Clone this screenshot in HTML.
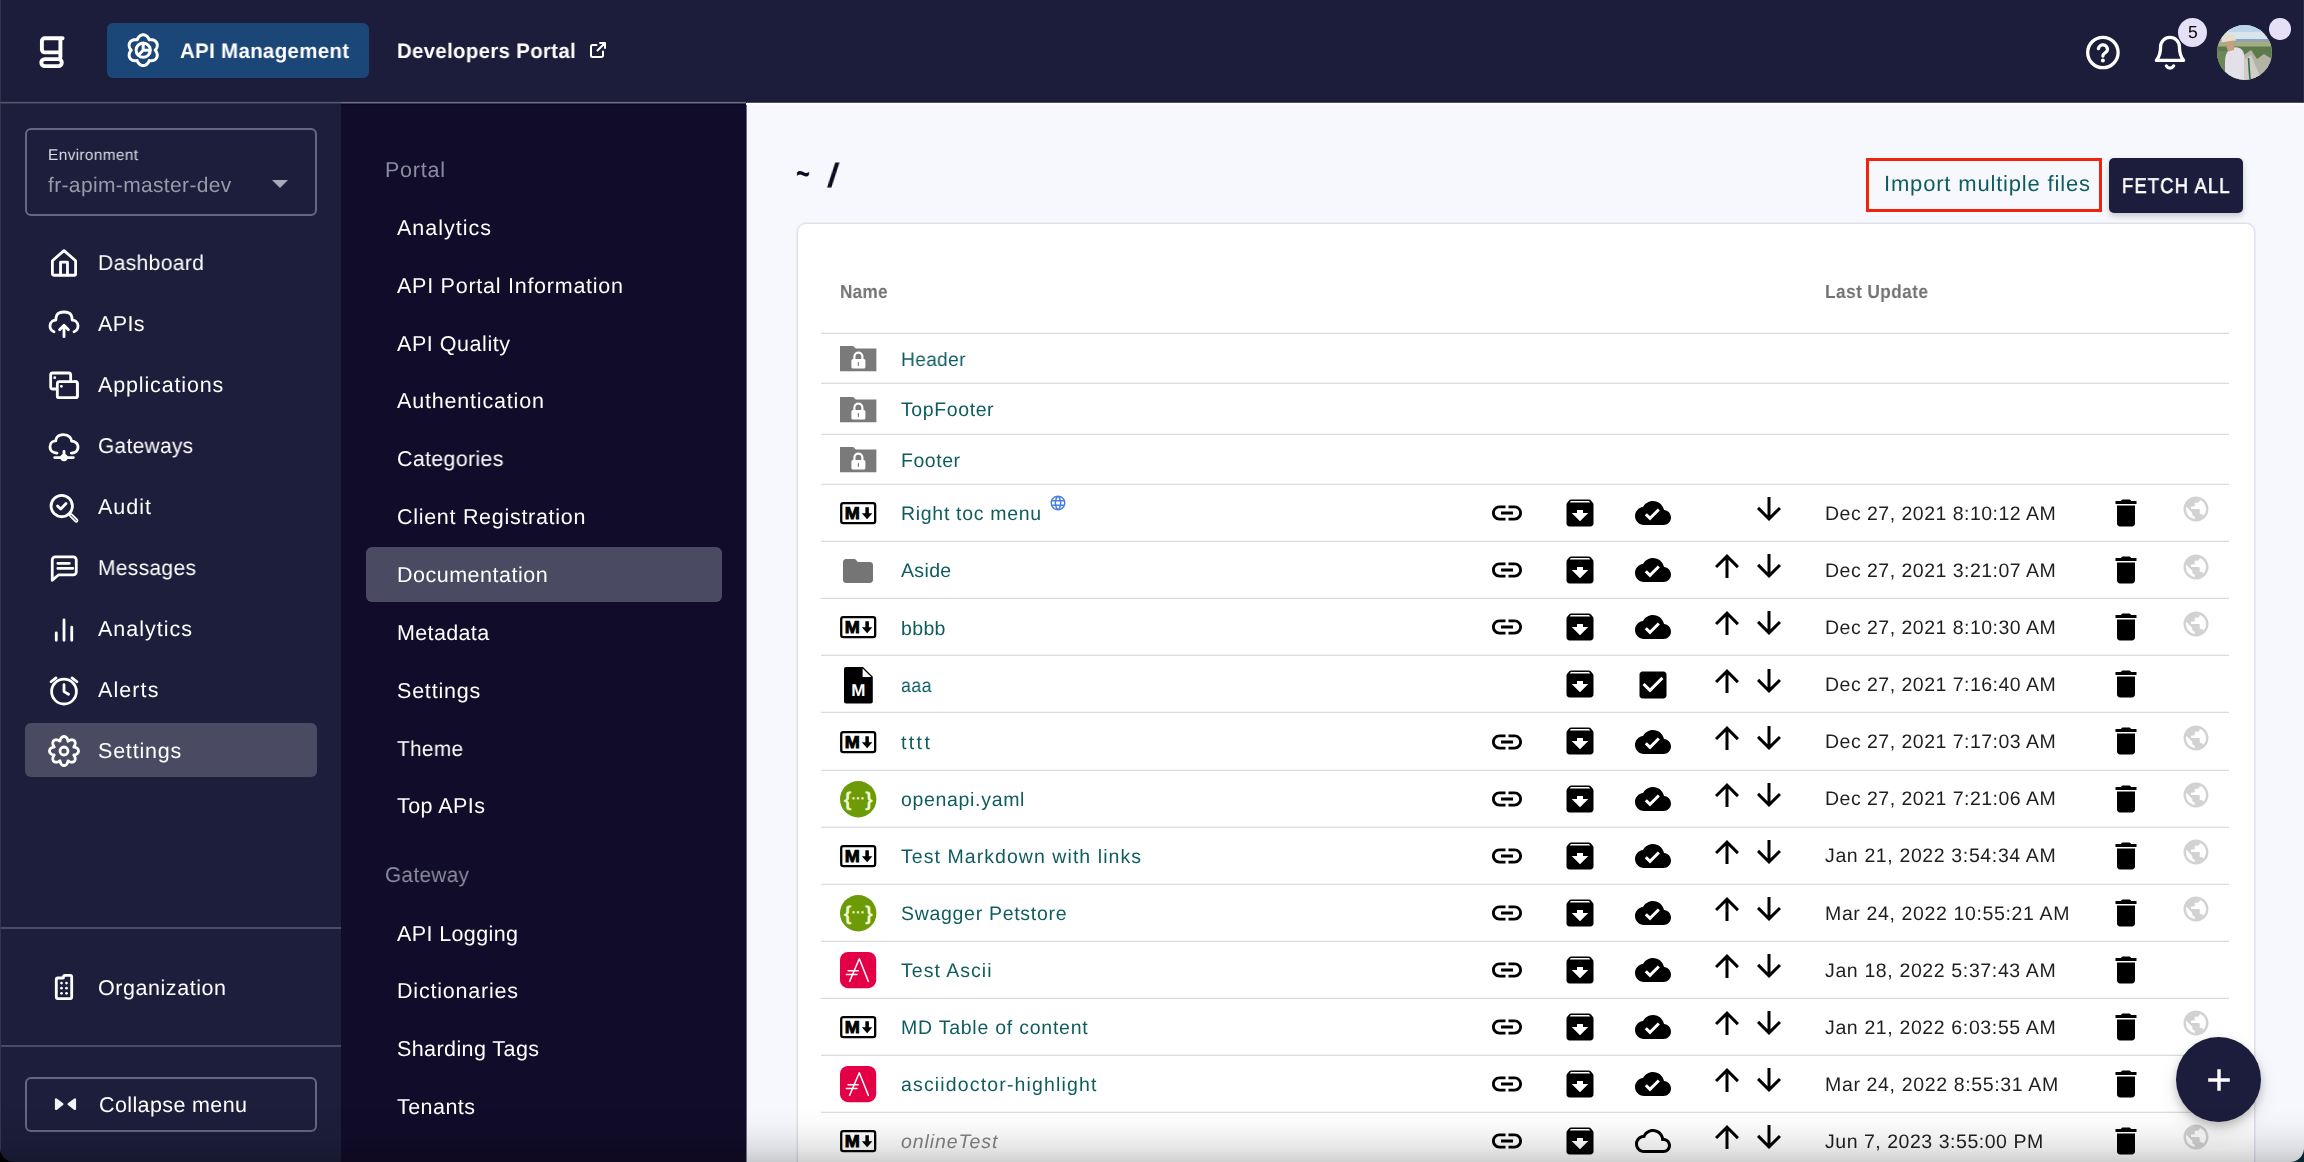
<!DOCTYPE html>
<html lang="en"><head><meta charset="utf-8"><title>Documentation</title>
<style>
*{box-sizing:border-box;margin:0;padding:0}
html,body{width:2304px;height:1162px;overflow:hidden;background:#f7f8fd}
body{font-family:"Liberation Sans",sans-serif;position:relative;color:#fff;text-rendering:geometricPrecision}
.abs{position:absolute}
.t{position:absolute;white-space:nowrap;line-height:1;will-change:transform}
#top{position:absolute;left:0;top:0;width:2304px;height:103px;background:#1c1d3a}
#side{position:absolute;left:0;top:103px;width:341px;height:1059px;background:#1d1e3b}
#nav2{position:absolute;left:341px;top:103px;width:405px;height:1059px;background:#110c29}
#main{position:absolute;left:746px;top:103px;width:1558px;height:1059px;background:#f7f8fd}
svg{position:absolute;overflow:visible}
.ic{fill:none;stroke:#fff;stroke-linecap:round;stroke-linejoin:round}
</style></head>
<body>
<header>
<div id="top"></div>
<svg style="left:30px;top:30px" width="44" height="44" viewBox="30 30 44 44"><g fill="none" stroke="#fff" stroke-width="3.900" stroke-linejoin="round" stroke-linecap="round">
<path d="M62.600 38.300H44.800a2.900 2.900 0 0 0-2.900 2.900v8.300a2.900 2.900 0 0 0 2.900 2.900h15.600V38.300v19"/>
<rect x="41.300" y="59.100" width="20.500" height="7" rx="3.500"/></g></svg>
<div class="abs" style="left:107px;top:23px;width:262px;height:55px;border-radius:6px;background:#1b4678"></div>
<svg style="left:120px;top:27px" width="46" height="46" viewBox="120 27 46 46"><g class="ic" stroke-width="3">
<path d="M155.20 50.20 L155.55 49.77 L155.88 49.31 L156.18 48.84 L156.45 48.34 L156.69 47.82 L156.89 47.29 L157.05 46.75 L157.16 46.20 L157.23 45.64 L157.24 45.09 L157.21 44.54 L157.12 44.00 L156.97 43.48 L156.78 42.98 L156.54 42.50 L156.24 42.05 L155.91 41.63 L155.52 41.25 L155.10 40.90 L154.65 40.59 L154.16 40.33 L153.65 40.11 L153.12 39.93 L152.57 39.80 L152.01 39.71 L151.44 39.65 L150.87 39.64 L150.31 39.67 L149.75 39.72 L149.20 39.81 L149.00 39.29 L148.77 38.78 L148.51 38.28 L148.21 37.79 L147.89 37.33 L147.53 36.89 L147.13 36.48 L146.71 36.10 L146.27 35.77 L145.80 35.48 L145.30 35.24 L144.79 35.05 L144.27 34.91 L143.74 34.83 L143.20 34.80 L142.66 34.83 L142.13 34.91 L141.61 35.05 L141.10 35.24 L140.60 35.48 L140.13 35.77 L139.69 36.10 L139.27 36.48 L138.87 36.89 L138.51 37.33 L138.19 37.79 L137.89 38.28 L137.63 38.78 L137.40 39.29 L137.20 39.81 L136.65 39.72 L136.09 39.67 L135.53 39.64 L134.96 39.65 L134.39 39.71 L133.83 39.80 L133.28 39.93 L132.75 40.11 L132.24 40.33 L131.75 40.59 L131.30 40.90 L130.88 41.25 L130.49 41.63 L130.16 42.05 L129.86 42.50 L129.62 42.98 L129.43 43.48 L129.28 44.00 L129.19 44.54 L129.16 45.09 L129.17 45.64 L129.24 46.20 L129.35 46.75 L129.51 47.29 L129.71 47.82 L129.95 48.34 L130.22 48.84 L130.52 49.31 L130.85 49.77 L131.20 50.20 L130.85 50.63 L130.52 51.09 L130.22 51.56 L129.95 52.06 L129.71 52.58 L129.51 53.11 L129.35 53.65 L129.24 54.20 L129.17 54.76 L129.16 55.31 L129.19 55.86 L129.28 56.40 L129.43 56.92 L129.62 57.42 L129.86 57.90 L130.16 58.35 L130.49 58.77 L130.88 59.15 L131.30 59.50 L131.75 59.81 L132.24 60.07 L132.75 60.29 L133.28 60.47 L133.83 60.60 L134.39 60.69 L134.96 60.75 L135.53 60.76 L136.09 60.73 L136.65 60.68 L137.20 60.59 L137.40 61.11 L137.63 61.62 L137.89 62.12 L138.19 62.61 L138.51 63.07 L138.87 63.51 L139.27 63.92 L139.69 64.30 L140.13 64.63 L140.60 64.92 L141.10 65.16 L141.61 65.35 L142.13 65.49 L142.66 65.57 L143.20 65.60 L143.74 65.57 L144.27 65.49 L144.79 65.35 L145.30 65.16 L145.80 64.92 L146.27 64.63 L146.71 64.30 L147.13 63.92 L147.53 63.51 L147.89 63.07 L148.21 62.61 L148.51 62.12 L148.77 61.62 L149.00 61.11 L149.20 60.59 L149.75 60.68 L150.31 60.73 L150.87 60.76 L151.44 60.75 L152.01 60.69 L152.57 60.60 L153.12 60.47 L153.65 60.29 L154.16 60.07 L154.65 59.81 L155.10 59.50 L155.52 59.15 L155.91 58.77 L156.24 58.35 L156.54 57.90 L156.78 57.42 L156.97 56.92 L157.12 56.40 L157.21 55.86 L157.24 55.31 L157.23 54.76 L157.16 54.20 L157.05 53.65 L156.89 53.11 L156.69 52.58 L156.45 52.06 L156.18 51.56 L155.88 51.09 L155.55 50.63Z"/>
<circle cx="143.200" cy="50.200" r="7.100"/><path d="M143.200 43.500v6.700h6.700M143.200 50.200l-4.600 4.800"/></g></svg>
<div class="t" style="left:180.2px;top:41px;font-size:21px;color:#fff;font-weight:bold;letter-spacing:0.36px;font-style:normal;transform:scaleX(0.9719);transform-origin:0 0;">API Management</div>
<div class="t" style="left:396.6px;top:41px;font-size:21px;color:#fff;font-weight:bold;letter-spacing:0.361px;font-style:normal;transform:scaleX(0.9693);transform-origin:0 0;">Developers Portal</div>
<svg style="left:589px;top:41px" width="18" height="18" viewBox="0 0 18 18"><g class="ic" stroke-width="2">
<path d="M14 10.5v4a1.5 1.5 0 0 1-1.5 1.5h-9A1.5 1.5 0 0 1 2 14.500v-9A1.5 1.500 0 0 1 3.500 4h4"/><path d="M11 2h5v5M16 2L8.500 9.500"/></g></svg>
<svg style="left:2080px;top:30px" width="46" height="46" viewBox="2080 30 46 46"><g class="ic" stroke-width="3.300">
<circle cx="2102.900" cy="52.500" r="15.200"/><path d="M2098.400 48.600a4.600 4.600 0 0 1 9.100.800c0 3.100-4.600 3.700-4.600 6.600"/></g><circle cx="2102.900" cy="60.400" r="2" fill="#fff"/></svg>
<svg style="left:2150px;top:30px" width="40" height="44" viewBox="2150 30 40 44"><g class="ic" stroke-width="3.300">
<path d="M2156.400 60.400c2.600-3.200 4.200-6.400 4.200-13.600a9.400 9.400 0 0 1 18.800 0c0 7.200 1.600 10.400 4.200 13.600z"/><path d="M2166.400 66a4.200 4.200 0 0 0 7.200 0"/></g></svg>
<div class="abs" style="left:2178px;top:17.500px;width:29px;height:29px;border-radius:50%;background:#e5dff8"></div>
<div class="t" style="left:2187.7px;top:24px;font-size:17.5px;color:#000;font-weight:normal;letter-spacing:0px;font-style:normal;">5</div>
<svg style="left:2217px;top:25px" width="55" height="55" viewBox="0 0 55 55"><defs><clipPath id="av"><circle cx="27.500" cy="27.500" r="27.400"/></clipPath></defs><g clip-path="url(#av)">
<rect width="55" height="55" fill="#d9e5ec"/><rect y="0" width="55" height="7" fill="#bcd6e8"/>
<rect y="14" width="55" height="3.500" fill="#8fa3b3"/><rect y="17" width="55" height="5" fill="#a4ad80"/>
<rect y="21.500" width="55" height="34" fill="#5d7a4c"/><path d="M0 26h12v29H0z" fill="#6c8759"/>
<path d="M27 30l7-5 6 9 7-5 8 5v21H27z" fill="#b5b2a6"/><path d="M28 34l6-4 5 12 6 13H28z" fill="#cfcdc4"/><path d="M31.500 33l1.500 22" stroke="#2e6b4f" stroke-width="1.600"/>
<path d="M8 55V37c0-8 3-13.500 9-14.500 6-1 10.500 3 10.500 10.500v22z" fill="#e3e0e9"/><path d="M7.500 15.500h9.500v9.500l-6 1.500z" fill="#c49f84"/><path d="M4.500 15c0-4 3-5.800 7.200-5.800s7.300 2.300 7.300 6.300l-6 .4-8.300 1.600z" fill="#e7ddc8"/>
</g></svg>
<div class="abs" style="left:2269px;top:18px;width:21.500px;height:21.500px;border-radius:50%;background:#e5dff8"></div>
</header>
<aside>
<div id="side"></div>
<div class="abs" style="left:0;top:101px;width:341px;height:3px;background:linear-gradient(#25263f 0,#25263f 1px,#55566e 1px,#55566e 2px,#36374f 2px,#36374f 3px);z-index:3"></div>
<div class="abs" style="left:341px;top:101px;width:405px;height:4px;background:linear-gradient(#27283f 0,#27283f 1px,#6c6d86 1px,#6c6d86 2px,#3a3a55 2px,#3a3a55 3px,#0b0720 3px,#0b0720 4px);z-index:3"></div>
<div class="abs" style="left:25px;top:128px;width:292px;height:88px;border:2px solid #676880;border-radius:6px"></div>
<div class="t" style="left:48.0px;top:148px;font-size:15.5px;color:#dcdce6;font-weight:normal;letter-spacing:0.352px;font-style:normal;transform:scaleX(0.9941);transform-origin:0 0;">Environment</div>
<div class="t" style="left:48.0px;top:175px;font-size:21px;color:#9899ab;font-weight:normal;letter-spacing:0.351px;font-style:normal;transform:scaleX(0.9982);transform-origin:0 0;">fr-apim-master-dev</div>
<svg style="left:272px;top:180px" width="16" height="8" viewBox="0 0 16 8"><path d="M0 0h16L8 8z" fill="#a9aab9"/></svg>
<div class="abs" style="left:25px;top:723px;width:292px;height:54px;border-radius:6px;background:#4a4b63"></div>
<svg style="left:48px;top:247.0px" width="32" height="32" viewBox="0 0 24 24"><g class="ic" stroke-width="2.1"><path d="M3.300 10.300L12 2.700l8.700 7.600V20.200a1 1 0 0 1-1 1h-15.400a1 1 0 0 1-1-1z"/><path d="M9.400 21v-9.600h5.200V21"/></g></svg>
<div class="t" style="left:98.2px;top:253px;font-size:21.5px;color:#fff;font-weight:normal;letter-spacing:0.357px;font-style:normal;transform:scaleX(0.9811);transform-origin:0 0;">Dashboard</div>
<svg style="left:48px;top:307.9px" width="32" height="32" viewBox="0 0 24 24"><g class="ic" stroke-width="2.1"><path d="M12 21.500V13m0 0l3.300 3.300M12 13l-3.300 3.300"/><path d="M19.500 17.800c1.500-.6 3-2 3-4.300 0-3.500-2.900-4.500-4.400-4.500 0-2 0-6-6.100-6s-6.100 4-6.100 6c-1.500 0-4.400 1-4.400 4.500 0 2.300 1.500 3.700 3 4.300"/></g></svg>
<div class="t" style="left:98.2px;top:314px;font-size:21.5px;color:#fff;font-weight:normal;letter-spacing:0.354px;font-style:normal;transform:scaleX(0.99);transform-origin:0 0;">APIs</div>
<svg style="left:48px;top:368.9px" width="32" height="32" viewBox="0 0 24 24"><g class="ic" stroke-width="2.1"><path d="M7 19.500v.5a1.500 1.500 0 0 0 1.500 1.500h12A1.500 1.500 0 0 0 22 20v-9a1.500 1.500 0 0 0-1.500-1.500H20"/><rect x="2" y="3" width="15" height="12" rx="1.500"/><rect x="7" y="9.500" width="15" height="12" rx="1.500" fill="#1d1e3b"/><path d="M5 6.500h.100M10 13h.100"/></g></svg>
<div class="t" style="left:98.2px;top:375px;font-size:21.5px;color:#fff;font-weight:normal;letter-spacing:0.851px;font-style:normal;">Applications</div>
<svg style="left:48px;top:429.9px" width="32" height="32" viewBox="0 0 24 24"><g class="ic" stroke-width="2.1"><path d="M6.800 17.300c-2.300 0-5.300-1.200-5.300-4.700 0-3.300 2.700-4.400 4.300-4.400 0-1.900 1.100-4.700 5.700-4.700s6.200 2.900 6.200 4.900c1.500 0 4.800.9 4.800 4.400 0 3.400-2.900 4.500-5 4.500"/><path d="M12 16v4M5 20.700h14"/><circle cx="12" cy="20.700" r="1.700" fill="#fff"/></g></svg>
<div class="t" style="left:98.2px;top:436px;font-size:21.5px;color:#fff;font-weight:normal;letter-spacing:0.361px;font-style:normal;transform:scaleX(0.9701);transform-origin:0 0;">Gateways</div>
<svg style="left:48px;top:490.8px" width="32" height="32" viewBox="0 0 24 24"><g class="ic" stroke-width="2.1"><circle cx="10.300" cy="11.300" r="8"/><path d="M7.200 11.300l2.300 2.300 4-4.200"/><path d="M17.200 18.200l4 4" stroke-width="3.200"/><path d="M17.200 18.200l4 4" stroke="#1d1e3b" stroke-width="0.700"/></g></svg>
<div class="t" style="left:98.2px;top:497px;font-size:21.5px;color:#fff;font-weight:normal;letter-spacing:0.996px;font-style:normal;">Audit</div>
<svg style="left:48px;top:551.8px" width="32" height="32" viewBox="0 0 24 24"><g class="ic" stroke-width="2.1"><path d="M3.200 21.200V5.800a2.200 2.200 0 0 1 2.200-2.200h13.600a2.200 2.200 0 0 1 2.200 2.200v9.200a2.200 2.200 0 0 1-2.200 2.200H7.800z"/><path d="M7.400 8.600h8.600M7.400 12.300h11.200"/></g></svg>
<div class="t" style="left:98.2px;top:558px;font-size:21.5px;color:#fff;font-weight:normal;letter-spacing:0.359px;font-style:normal;transform:scaleX(0.975);transform-origin:0 0;">Messages</div>
<svg style="left:48px;top:612.7px" width="32" height="32" viewBox="0 0 24 24"><g class="ic" stroke-width="2.1"><path d="M6.200 20.500v-5.600M12 20.500V5.200M17.800 20.500v-9.800"/></g></svg>
<div class="t" style="left:98.2px;top:619px;font-size:21.5px;color:#fff;font-weight:normal;letter-spacing:0.994px;font-style:normal;">Analytics</div>
<svg style="left:48px;top:673.7px" width="32" height="32" viewBox="0 0 24 24"><g class="ic" stroke-width="2.1"><circle cx="12" cy="13.200" r="9.300"/><path d="M12 8V13.200l3.400 2M2.300 5.800L6 2.900M21.700 5.800L18 2.900"/></g></svg>
<div class="t" style="left:98.2px;top:680px;font-size:21.5px;color:#fff;font-weight:normal;letter-spacing:1.086px;font-style:normal;">Alerts</div>
<svg style="left:48px;top:734.6px" width="32" height="32" viewBox="0 0 24 24"><g class="ic" stroke-width="2.1"><circle cx="12" cy="12" r="3"/><path d="M22.90 12.00 L22.87 11.62 L22.77 11.25 L22.62 10.88 L22.40 10.54 L22.13 10.21 L21.80 9.92 L21.42 9.65 L20.99 9.42 L20.51 9.23 L19.98 9.10 L19.34 9.03 L19.51 8.65 L19.84 8.17 L20.09 7.70 L20.26 7.23 L20.37 6.77 L20.42 6.32 L20.41 5.89 L20.35 5.48 L20.23 5.09 L20.06 4.74 L19.84 4.43 L19.57 4.16 L19.26 3.94 L18.91 3.77 L18.52 3.65 L18.11 3.59 L17.68 3.58 L17.23 3.63 L16.77 3.74 L16.30 3.91 L15.83 4.16 L15.35 4.49 L14.97 4.66 L14.90 4.02 L14.77 3.49 L14.58 3.01 L14.35 2.58 L14.08 2.20 L13.79 1.87 L13.46 1.60 L13.12 1.38 L12.75 1.23 L12.38 1.13 L12.00 1.10 L11.62 1.13 L11.25 1.23 L10.88 1.38 L10.54 1.60 L10.21 1.87 L9.92 2.20 L9.65 2.58 L9.42 3.01 L9.23 3.49 L9.10 4.02 L9.03 4.66 L8.65 4.49 L8.17 4.16 L7.70 3.91 L7.23 3.74 L6.77 3.63 L6.32 3.58 L5.89 3.59 L5.48 3.65 L5.09 3.77 L4.74 3.94 L4.43 4.16 L4.16 4.43 L3.94 4.74 L3.77 5.09 L3.65 5.48 L3.59 5.89 L3.58 6.32 L3.63 6.77 L3.74 7.23 L3.91 7.70 L4.16 8.17 L4.49 8.65 L4.66 9.03 L4.02 9.10 L3.49 9.23 L3.01 9.42 L2.58 9.65 L2.20 9.92 L1.87 10.21 L1.60 10.54 L1.38 10.88 L1.23 11.25 L1.13 11.62 L1.10 12.00 L1.13 12.38 L1.23 12.75 L1.38 13.12 L1.60 13.46 L1.87 13.79 L2.20 14.08 L2.58 14.35 L3.01 14.58 L3.49 14.77 L4.02 14.90 L4.66 14.97 L4.49 15.35 L4.16 15.83 L3.91 16.30 L3.74 16.77 L3.63 17.23 L3.58 17.68 L3.59 18.11 L3.65 18.52 L3.77 18.91 L3.94 19.26 L4.16 19.57 L4.43 19.84 L4.74 20.06 L5.09 20.23 L5.48 20.35 L5.89 20.41 L6.32 20.42 L6.77 20.37 L7.23 20.26 L7.70 20.09 L8.17 19.84 L8.65 19.51 L9.03 19.34 L9.10 19.98 L9.23 20.51 L9.42 20.99 L9.65 21.42 L9.92 21.80 L10.21 22.13 L10.54 22.40 L10.88 22.62 L11.25 22.77 L11.62 22.87 L12.00 22.90 L12.38 22.87 L12.75 22.77 L13.12 22.62 L13.46 22.40 L13.79 22.13 L14.08 21.80 L14.35 21.42 L14.58 20.99 L14.77 20.51 L14.90 19.98 L14.97 19.34 L15.35 19.51 L15.83 19.84 L16.30 20.09 L16.77 20.26 L17.23 20.37 L17.68 20.42 L18.11 20.41 L18.52 20.35 L18.91 20.23 L19.26 20.06 L19.57 19.84 L19.84 19.57 L20.06 19.26 L20.23 18.91 L20.35 18.52 L20.41 18.11 L20.42 17.68 L20.37 17.23 L20.26 16.77 L20.09 16.30 L19.84 15.83 L19.51 15.35 L19.34 14.97 L19.98 14.90 L20.51 14.77 L20.99 14.58 L21.42 14.35 L21.80 14.08 L22.13 13.79 L22.40 13.46 L22.62 13.12 L22.77 12.75 L22.87 12.38Z"/></g></svg>
<div class="t" style="left:98.2px;top:741px;font-size:21.5px;color:#fff;font-weight:normal;letter-spacing:0.788px;font-style:normal;">Settings</div>
<div class="abs" style="left:0;top:927px;width:341px;height:2px;background:#4b4c64"></div>
<svg style="left:48px;top:968px" width="32" height="38" viewBox="48 968 32 38"><g class="ic" stroke-width="2.800"><path d="M56.300 980v17.100a1.500 1.500 0 0 0 1.500 1.500h12.400a1.500 1.500 0 0 0 1.500-1.500V976.900a1.500 1.500 0 0 0-1.500-1.500h-5.200a1.500 1.500 0 0 0-1.500 1.500v.6a.5.500 0 0 1-.5.500h-5.200a1.500 1.500 0 0 0-1.500 1.500z"/></g><g fill="#fff"><circle cx="61.500" cy="983.100" r="1.350"/><circle cx="66.500" cy="983.100" r="1.350"/><circle cx="61.500" cy="988.200" r="1.350"/><circle cx="66.500" cy="988.200" r="1.350"/><circle cx="61.500" cy="993.300" r="1.350"/><circle cx="66.500" cy="993.300" r="1.350"/></g></svg>
<div class="t" style="left:98.2px;top:978px;font-size:21.5px;color:#fff;font-weight:normal;letter-spacing:0.554px;font-style:normal;">Organization</div>
<div class="abs" style="left:0;top:1045px;width:341px;height:2px;background:#4b4c64"></div>
<div class="abs" style="left:25px;top:1077px;width:292px;height:55px;border:2px solid #676880;border-radius:6px"></div>
<svg style="left:50px;top:1094px" width="32" height="20" viewBox="50 1094 32 20"><path d="M56 1099.400v9.600l6.400-4.800zM75 1099.400v9.600l-6.400-4.800z" fill="#f4f4fb" stroke="#f4f4fb" stroke-width="2.200" stroke-linejoin="round"/></svg>
<div class="t" style="left:99.0px;top:1095px;font-size:21.5px;color:#fff;font-weight:normal;letter-spacing:0.382px;font-style:normal;">Collapse menu</div>
</aside>
<nav>
<div id="nav2"></div>
<div class="t" style="left:384.8px;top:160px;font-size:21.5px;color:#8b8c9f;font-weight:normal;letter-spacing:0.766px;font-style:normal;">Portal</div>
<div class="abs" style="left:366px;top:547px;width:356px;height:54.500px;border-radius:6px;background:#4a4b63"></div>
<div class="t" style="left:396.8px;top:218px;font-size:21.5px;color:#fff;font-weight:normal;letter-spacing:0.994px;font-style:normal;">Analytics</div>
<div class="t" style="left:396.8px;top:276px;font-size:21.5px;color:#fff;font-weight:normal;letter-spacing:0.746px;font-style:normal;">API Portal Information</div>
<div class="t" style="left:396.8px;top:334px;font-size:21.5px;color:#fff;font-weight:normal;letter-spacing:0.545px;font-style:normal;">API Quality</div>
<div class="t" style="left:396.8px;top:391px;font-size:21.5px;color:#fff;font-weight:normal;letter-spacing:0.818px;font-style:normal;">Authentication</div>
<div class="t" style="left:396.8px;top:449px;font-size:21.5px;color:#fff;font-weight:normal;letter-spacing:0.352px;font-style:normal;transform:scaleX(0.9929);transform-origin:0 0;">Categories</div>
<div class="t" style="left:396.8px;top:507px;font-size:21.5px;color:#fff;font-weight:normal;letter-spacing:0.707px;font-style:normal;">Client Registration</div>
<div class="t" style="left:396.8px;top:565px;font-size:21.5px;color:#fff;font-weight:normal;letter-spacing:0.498px;font-style:normal;">Documentation</div>
<div class="t" style="left:396.8px;top:623px;font-size:21.5px;color:#fff;font-weight:normal;letter-spacing:0.35px;font-style:normal;transform:scaleX(0.9988);transform-origin:0 0;">Metadata</div>
<div class="t" style="left:396.8px;top:681px;font-size:21.5px;color:#fff;font-weight:normal;letter-spacing:0.788px;font-style:normal;">Settings</div>
<div class="t" style="left:396.8px;top:739px;font-size:21.5px;color:#fff;font-weight:normal;letter-spacing:0.363px;font-style:normal;transform:scaleX(0.9653);transform-origin:0 0;">Theme</div>
<div class="t" style="left:396.8px;top:796px;font-size:21.5px;color:#fff;font-weight:normal;letter-spacing:0.449px;font-style:normal;">Top APIs</div>
<div class="t" style="left:384.8px;top:865px;font-size:21.5px;color:#8b8c9f;font-weight:normal;letter-spacing:0.363px;font-style:normal;transform:scaleX(0.9651);transform-origin:0 0;">Gateway</div>
<div class="t" style="left:396.8px;top:924px;font-size:21.5px;color:#fff;font-weight:normal;letter-spacing:0.384px;font-style:normal;">API Logging</div>
<div class="t" style="left:396.8px;top:981px;font-size:21.5px;color:#fff;font-weight:normal;letter-spacing:0.788px;font-style:normal;">Dictionaries</div>
<div class="t" style="left:396.8px;top:1039px;font-size:21.5px;color:#fff;font-weight:normal;letter-spacing:0.411px;font-style:normal;">Sharding Tags</div>
<div class="t" style="left:396.8px;top:1097px;font-size:21.5px;color:#fff;font-weight:normal;letter-spacing:0.448px;font-style:normal;">Tenants</div>
</nav>
<main>
<div id="main"></div>
<div class="abs" style="left:747px;top:102px;width:1557px;height:3px;background:linear-gradient(#505169 0,#505169 1px,#fff 1px,#fff 2px,#fbfbfe 2px,#fbfbfe 3px)"></div>
<div class="abs" style="left:2303px;top:0;width:1px;height:102px;background:#2c2d49"></div>
<div class="t" style="left:795.6px;top:157px;font-size:34px;color:#0b0a1f;font-weight:bold;letter-spacing:0px;font-style:normal;transform:scaleX(0.7);transform-origin:0 0;">~</div>
<div class="t" style="left:825.7px;top:160px;font-size:33.5px;color:#0b0a1f;font-weight:bold;letter-spacing:0px;font-style:normal;transform:skewX(-7deg) scaleX(1.08);transform-origin:0 100%;">/</div>
<div class="abs" style="left:1866px;top:158px;width:236px;height:54px;border:3px solid #f0240c"></div>
<div class="t" style="left:1884.0px;top:173px;font-size:22px;color:#0f5c5f;font-weight:normal;letter-spacing:0.824px;font-style:normal;">Import multiple files</div>
<div class="abs" style="left:2109px;top:158px;width:134px;height:55px;border-radius:5px;background:#1c1d3c;box-shadow:0 3px 6px rgba(0,0,0,.2)"></div>
<div class="t" style="left:2122.0px;top:176px;font-size:21.5px;color:#fff;font-weight:normal;letter-spacing:1.406px;font-style:normal;transform:scaleX(0.8535);transform-origin:0 0;-webkit-text-stroke:0.6px #fff;">FETCH ALL</div>
<div class="abs" style="left:796.500px;top:222.500px;width:1458px;height:960px;border:1px solid #dedfe7;box-shadow:0 0 0 1px rgba(222,223,231,.45);border-radius:9px;background:#fff"></div>
<div class="t" style="left:840.4px;top:283px;font-size:19px;color:#727272;font-weight:bold;letter-spacing:0.389px;font-style:normal;transform:scaleX(0.8995);transform-origin:0 0;">Name</div>
<div class="t" style="left:1825.0px;top:283px;font-size:19px;color:#727272;font-weight:bold;letter-spacing:0.383px;font-style:normal;transform:scaleX(0.9149);transform-origin:0 0;">Last Update</div>
<div class="row">
<div class="abs" style="left:821px;top:332px;width:1408px;height:2px;background:linear-gradient(#f5f5f5 50%,#dcdcdc 50%)"></div>
<svg style="left:839.700px;top:346.4px" width="36.400" height="25.200" viewBox="0 0 36.400 25.200"><path d="M0 0h13.200l2.600 2.400h20.600v22.800H0z" fill="#7a7a7a"/>
<rect x="11.400" y="13" width="14" height="9.600" rx="1.600" fill="#fff"/><path d="M14.400 13.500v-2.900a4 4 0 0 1 8 0v2.900" fill="none" stroke="#fff" stroke-width="2.200"/><rect x="17.800" y="16.200" width="1.200" height="3.600" fill="#7a7a7a"/></svg>
<div class="t" style="left:901.2px;top:351px;font-size:19.5px;color:#0f5c5f;font-weight:normal;letter-spacing:0.357px;font-style:normal;transform:scaleX(0.9809);transform-origin:0 0;">Header</div>
</div>
<div class="row">
<div class="abs" style="left:821px;top:382px;width:1408px;height:2px;background:linear-gradient(#f5f5f5 50%,#dcdcdc 50%)"></div>
<svg style="left:839.700px;top:396.7px" width="36.400" height="25.200" viewBox="0 0 36.400 25.200"><path d="M0 0h13.200l2.600 2.400h20.600v22.800H0z" fill="#7a7a7a"/>
<rect x="11.400" y="13" width="14" height="9.600" rx="1.600" fill="#fff"/><path d="M14.400 13.500v-2.900a4 4 0 0 1 8 0v2.900" fill="none" stroke="#fff" stroke-width="2.200"/><rect x="17.800" y="16.200" width="1.200" height="3.600" fill="#7a7a7a"/></svg>
<div class="t" style="left:901.2px;top:401px;font-size:19.5px;color:#0f5c5f;font-weight:normal;letter-spacing:0.598px;font-style:normal;">TopFooter</div>
</div>
<div class="row">
<div class="abs" style="left:821px;top:433px;width:1408px;height:2px;background:linear-gradient(#f5f5f5 50%,#dcdcdc 50%)"></div>
<svg style="left:839.700px;top:447.0px" width="36.400" height="25.200" viewBox="0 0 36.400 25.200"><path d="M0 0h13.200l2.600 2.400h20.600v22.800H0z" fill="#7a7a7a"/>
<rect x="11.400" y="13" width="14" height="9.600" rx="1.600" fill="#fff"/><path d="M14.400 13.500v-2.900a4 4 0 0 1 8 0v2.900" fill="none" stroke="#fff" stroke-width="2.200"/><rect x="17.800" y="16.200" width="1.200" height="3.600" fill="#7a7a7a"/></svg>
<div class="t" style="left:901.2px;top:452px;font-size:19.5px;color:#0f5c5f;font-weight:normal;letter-spacing:0.528px;font-style:normal;">Footer</div>
</div>
<div class="row">
<div class="abs" style="left:821px;top:483px;width:1408px;height:2px;background:linear-gradient(#f5f5f5 50%,#dcdcdc 50%)"></div>
<svg style="left:839.700px;top:502.2px" width="36.400" height="22.400" viewBox="0 0 208 128"><rect x="7" y="7" width="194" height="114" rx="12" fill="#fff" stroke="#000" stroke-width="13"/><text x="27" y="98" font-family="Liberation Sans, sans-serif" font-weight="bold" font-size="99" textLength="86" lengthAdjust="spacingAndGlyphs" stroke="#000" stroke-width="5">M</text><path d="M155 98l-30-33h20V30h20v35h20z"/></svg>
<div class="t" style="left:901.2px;top:505px;font-size:19.5px;color:#0f5c5f;font-weight:normal;letter-spacing:0.696px;font-style:normal;">Right toc menu</div>
<svg style="left:1048.5px;top:494.2px" width="18" height="18" viewBox="0 0 24 24"><path d="M11.990 2C6.470 2 2 6.480 2 12s4.470 10 9.990 10C17.520 22 22 17.520 22 12S17.520 2 11.990 2zm6.930 6h-2.950c-.320-1.250-.780-2.450-1.380-3.560 1.840.630 3.370 1.910 4.330 3.560zM12 4.040c.830 1.200 1.480 2.530 1.910 3.960h-3.820c.430-1.430 1.080-2.760 1.910-3.960zM4.260 14C4.100 13.360 4 12.690 4 12s.100-1.360.260-2h3.380c-.080.660-.140 1.320-.140 2 0 .680.060 1.340.140 2H4.260zm.820 2h2.950c.320 1.250.780 2.450 1.380 3.560-1.840-.630-3.370-1.900-4.330-3.560zm2.950-8H5.080c.960-1.660 2.490-2.930 4.330-3.560C8.810 5.550 8.350 6.750 8.030 8zM12 19.960c-.830-1.200-1.480-2.530-1.910-3.960h3.820c-.430 1.430-1.080 2.760-1.910 3.960zM14.340 14H9.660c-.090-.660-.160-1.320-.160-2 0-.680.070-1.350.160-2h4.680c.090.650.160 1.320.160 2 0 .680-.070 1.340-.160 2zm.250 5.560c.600-1.110 1.060-2.310 1.380-3.560h2.950c-.960 1.650-2.490 2.930-4.330 3.560zM16.360 14c.080-.660.140-1.320.140-2 0-.680-.060-1.340-.140-2h3.380c.160.640.260 1.310.260 2s-.100 1.360-.260 2h-3.380z" fill="#4a80e4"/></svg>
<svg style="left:1488.7px;top:495.2px" width="36" height="36" viewBox="0 0 24 24"><path d="M3.9 12c0-1.71 1.39-3.1 3.1-3.1h4V7H7c-2.76 0-5 2.24-5 5s2.24 5 5 5h4v-1.9H7c-1.71 0-3.1-1.39-3.1-3.1zM8 13h8v-2H8v2zm9-6h-4v1.9h4c1.71 0 3.1 1.39 3.1 3.1s-1.39 3.1-3.1 3.1h-4V17h4c2.76 0 5-2.24 5-5s-2.24-5-5-5z" fill="#000"/></svg>
<svg style="left:1562.2px;top:495.0px" width="36" height="36" viewBox="0 0 24 24"><path d="M20.54 5.23l-1.39-1.68C18.88 3.21 18.47 3 18 3H6c-.47 0-.88.21-1.16.55L3.46 5.23C3.17 5.57 3 6.02 3 6.5V19c0 1.1.9 2 2 2h14c1.1 0 2-.9 2-2V6.5c0-.48-.17-.93-.46-1.27zM12 17.5L6.5 12H10v-2h4v2h3.5L12 17.5zM5.12 5l.81-1h12l.94 1H5.12z" fill="#000"/></svg>
<svg style="left:1635.4px;top:495.2px" width="36" height="36" viewBox="0 0 24 24"><path d="M19.35 10.04C18.67 6.59 15.64 4 12 4 9.11 4 6.6 5.64 5.35 8.04 2.34 8.36 0 10.91 0 14c0 3.31 2.69 6 6 6h13c2.76 0 5-2.24 5-5 0-2.64-2.05-4.78-4.65-4.96zM10 17l-3.5-3.5 1.41-1.41L10 14.17 15.18 9l1.41 1.41L10 17z" fill="#000"/></svg>
<svg style="left:1751.0px;top:491.2px" width="36" height="36" viewBox="0 0 24 24"><path d="M20 12l-1.41-1.41L13 16.17V4h-2v12.17l-5.58-5.59L4 12l8 8 8-8z" fill="#000"/></svg>
<div class="t" style="left:1824.8px;top:505px;font-size:19.5px;color:#1f1f1f;font-weight:normal;letter-spacing:0.483px;font-style:normal;">Dec 27, 2021 8:10:12 AM</div>
<svg style="left:2107.5px;top:495.0px" width="36" height="36" viewBox="0 0 24 24"><path d="M6 19c0 1.1.9 2 2 2h8c1.1 0 2-.9 2-2V7H6v12zM19 4h-3.5l-1-1h-5l-1 1H5v2h14V4z" fill="#000"/></svg>
<svg style="left:2181.0px;top:494.4px" width="30" height="30" viewBox="0 0 24 24"><path d="M12 2C6.48 2 2 6.48 2 12s4.48 10 10 10 10-4.480 10-10S17.52 2 12 2zm-1 17.930c-3.950-.490-7-3.850-7-7.930 0-.620.080-1.210.210-1.790L9 15v1c0 1.100.900 2 2 2v1.930zm6.900-2.540c-.260-.810-1-1.390-1.900-1.390h-1v-3c0-.550-.450-1-1-1H8v-2h2c.550 0 1-.450 1-1V7h2c1.100 0 2-.900 2-2v-.410c2.930 1.190 5 4.060 5 7.410 0 2.080-.800 3.970-2.100 5.390z" fill="#d2d2d2"/></svg>
</div>
<div class="row">
<div class="abs" style="left:821px;top:540px;width:1408px;height:2px;background:linear-gradient(#f5f5f5 50%,#dcdcdc 50%)"></div>
<svg style="left:840.0px;top:552.5px" width="36" height="36" viewBox="0 0 24 24"><path d="M10 4H4c-1.100 0-1.990.900-1.990 2L2 18c0 1.100.900 2 2 2h16c1.100 0 2-.900 2-2V8c0-1.100-.900-2-2-2h-8l-2-2z" fill="#757575"/></svg>
<div class="t" style="left:901.2px;top:562px;font-size:19.5px;color:#0f5c5f;font-weight:normal;letter-spacing:0.351px;font-style:normal;transform:scaleX(0.9963);transform-origin:0 0;">Aside</div>
<svg style="left:1488.7px;top:552.3px" width="36" height="36" viewBox="0 0 24 24"><path d="M3.9 12c0-1.71 1.39-3.1 3.1-3.1h4V7H7c-2.76 0-5 2.24-5 5s2.24 5 5 5h4v-1.9H7c-1.71 0-3.1-1.39-3.1-3.1zM8 13h8v-2H8v2zm9-6h-4v1.9h4c1.71 0 3.1 1.39 3.1 3.1s-1.39 3.1-3.1 3.1h-4V17h4c2.76 0 5-2.24 5-5s-2.24-5-5-5z" fill="#000"/></svg>
<svg style="left:1562.2px;top:552.1px" width="36" height="36" viewBox="0 0 24 24"><path d="M20.54 5.23l-1.39-1.68C18.88 3.21 18.47 3 18 3H6c-.47 0-.88.21-1.16.55L3.46 5.23C3.17 5.57 3 6.02 3 6.5V19c0 1.1.9 2 2 2h14c1.1 0 2-.9 2-2V6.5c0-.48-.17-.93-.46-1.27zM12 17.5L6.5 12H10v-2h4v2h3.5L12 17.5zM5.12 5l.81-1h12l.94 1H5.12z" fill="#000"/></svg>
<svg style="left:1635.4px;top:552.3px" width="36" height="36" viewBox="0 0 24 24"><path d="M19.35 10.04C18.67 6.59 15.64 4 12 4 9.11 4 6.6 5.64 5.35 8.04 2.34 8.36 0 10.91 0 14c0 3.31 2.69 6 6 6h13c2.76 0 5-2.24 5-5 0-2.64-2.05-4.78-4.65-4.96zM10 17l-3.5-3.5 1.41-1.41L10 14.17 15.18 9l1.41 1.41L10 17z" fill="#000"/></svg>
<svg style="left:1708.6px;top:548.3px" width="36" height="36" viewBox="0 0 24 24"><path d="M4 12l1.41 1.41L11 7.83V20h2V7.83l5.58 5.59L20 12l-8-8-8 8z" fill="#000"/></svg>
<svg style="left:1751.0px;top:548.3px" width="36" height="36" viewBox="0 0 24 24"><path d="M20 12l-1.41-1.41L13 16.17V4h-2v12.17l-5.58-5.59L4 12l8 8 8-8z" fill="#000"/></svg>
<div class="t" style="left:1824.8px;top:562px;font-size:19.5px;color:#1f1f1f;font-weight:normal;letter-spacing:0.483px;font-style:normal;">Dec 27, 2021 3:21:07 AM</div>
<svg style="left:2107.5px;top:552.1px" width="36" height="36" viewBox="0 0 24 24"><path d="M6 19c0 1.1.9 2 2 2h8c1.1 0 2-.9 2-2V7H6v12zM19 4h-3.5l-1-1h-5l-1 1H5v2h14V4z" fill="#000"/></svg>
<svg style="left:2181.0px;top:551.5px" width="30" height="30" viewBox="0 0 24 24"><path d="M12 2C6.48 2 2 6.48 2 12s4.48 10 10 10 10-4.480 10-10S17.52 2 12 2zm-1 17.930c-3.950-.490-7-3.850-7-7.930 0-.620.080-1.210.210-1.790L9 15v1c0 1.100.900 2 2 2v1.930zm6.900-2.540c-.260-.810-1-1.390-1.900-1.390h-1v-3c0-.550-.450-1-1-1H8v-2h2c.550 0 1-.450 1-1V7h2c1.100 0 2-.900 2-2v-.410c2.930 1.190 5 4.060 5 7.410 0 2.080-.800 3.970-2.100 5.390z" fill="#d2d2d2"/></svg>
</div>
<div class="row">
<div class="abs" style="left:821px;top:597px;width:1408px;height:2px;background:linear-gradient(#f5f5f5 50%,#dcdcdc 50%)"></div>
<svg style="left:839.700px;top:616.4px" width="36.400" height="22.400" viewBox="0 0 208 128"><rect x="7" y="7" width="194" height="114" rx="12" fill="#fff" stroke="#000" stroke-width="13"/><text x="27" y="98" font-family="Liberation Sans, sans-serif" font-weight="bold" font-size="99" textLength="86" lengthAdjust="spacingAndGlyphs" stroke="#000" stroke-width="5">M</text><path d="M155 98l-30-33h20V30h20v35h20z"/></svg>
<div class="t" style="left:901.2px;top:620px;font-size:19.5px;color:#0f5c5f;font-weight:normal;letter-spacing:0.352px;font-style:normal;transform:scaleX(0.9945);transform-origin:0 0;">bbbb</div>
<svg style="left:1488.7px;top:609.4px" width="36" height="36" viewBox="0 0 24 24"><path d="M3.9 12c0-1.71 1.39-3.1 3.1-3.1h4V7H7c-2.76 0-5 2.24-5 5s2.24 5 5 5h4v-1.9H7c-1.71 0-3.1-1.39-3.1-3.1zM8 13h8v-2H8v2zm9-6h-4v1.9h4c1.71 0 3.1 1.39 3.1 3.1s-1.39 3.1-3.1 3.1h-4V17h4c2.76 0 5-2.24 5-5s-2.24-5-5-5z" fill="#000"/></svg>
<svg style="left:1562.2px;top:609.2px" width="36" height="36" viewBox="0 0 24 24"><path d="M20.54 5.23l-1.39-1.68C18.88 3.21 18.47 3 18 3H6c-.47 0-.88.21-1.16.55L3.46 5.23C3.17 5.57 3 6.02 3 6.5V19c0 1.1.9 2 2 2h14c1.1 0 2-.9 2-2V6.5c0-.48-.17-.93-.46-1.27zM12 17.5L6.5 12H10v-2h4v2h3.5L12 17.5zM5.12 5l.81-1h12l.94 1H5.12z" fill="#000"/></svg>
<svg style="left:1635.4px;top:609.4px" width="36" height="36" viewBox="0 0 24 24"><path d="M19.35 10.04C18.67 6.59 15.64 4 12 4 9.11 4 6.6 5.64 5.35 8.04 2.34 8.36 0 10.91 0 14c0 3.31 2.69 6 6 6h13c2.76 0 5-2.24 5-5 0-2.64-2.05-4.78-4.65-4.96zM10 17l-3.5-3.5 1.41-1.41L10 14.17 15.18 9l1.41 1.41L10 17z" fill="#000"/></svg>
<svg style="left:1708.6px;top:605.4px" width="36" height="36" viewBox="0 0 24 24"><path d="M4 12l1.41 1.41L11 7.83V20h2V7.83l5.58 5.59L20 12l-8-8-8 8z" fill="#000"/></svg>
<svg style="left:1751.0px;top:605.4px" width="36" height="36" viewBox="0 0 24 24"><path d="M20 12l-1.41-1.41L13 16.17V4h-2v12.17l-5.58-5.59L4 12l8 8 8-8z" fill="#000"/></svg>
<div class="t" style="left:1824.8px;top:619px;font-size:19.5px;color:#1f1f1f;font-weight:normal;letter-spacing:0.483px;font-style:normal;">Dec 27, 2021 8:10:30 AM</div>
<svg style="left:2107.5px;top:609.2px" width="36" height="36" viewBox="0 0 24 24"><path d="M6 19c0 1.1.9 2 2 2h8c1.1 0 2-.9 2-2V7H6v12zM19 4h-3.5l-1-1h-5l-1 1H5v2h14V4z" fill="#000"/></svg>
<svg style="left:2181.0px;top:608.6px" width="30" height="30" viewBox="0 0 24 24"><path d="M12 2C6.48 2 2 6.48 2 12s4.48 10 10 10 10-4.480 10-10S17.52 2 12 2zm-1 17.930c-3.950-.490-7-3.850-7-7.930 0-.620.080-1.210.210-1.790L9 15v1c0 1.100.900 2 2 2v1.930zm6.900-2.540c-.260-.810-1-1.390-1.900-1.390h-1v-3c0-.550-.450-1-1-1H8v-2h2c.550 0 1-.450 1-1V7h2c1.100 0 2-.900 2-2v-.410c2.930 1.190 5 4.060 5 7.410 0 2.080-.800 3.970-2.100 5.390z" fill="#d2d2d2"/></svg>
</div>
<div class="row">
<div class="abs" style="left:821px;top:654px;width:1408px;height:2px;background:linear-gradient(#f5f5f5 50%,#dcdcdc 50%)"></div>
<svg style="left:843.600px;top:666.5px" width="28.800" height="36.400" viewBox="0 0 28.800 36.400"><path d="M2 0h17l9.800 9.800V34.400a2 2 0 0 1-2 2H2a2 2 0 0 1-2-2V2a2 2 0 0 1 2-2z" fill="#000"/><path d="M18.600 1.500v8.600h8.600z" fill="#fff"/><text x="14.400" y="28.600" font-family="Liberation Sans, sans-serif" font-weight="bold" font-size="17" fill="#fff" text-anchor="middle">M</text></svg>
<div class="t" style="left:901.2px;top:677px;font-size:19.5px;color:#0f5c5f;font-weight:normal;letter-spacing:0.382px;font-style:normal;transform:scaleX(0.9156);transform-origin:0 0;">aaa</div>
<svg style="left:1562.2px;top:666.3px" width="36" height="36" viewBox="0 0 24 24"><path d="M20.54 5.23l-1.39-1.68C18.88 3.21 18.47 3 18 3H6c-.47 0-.88.21-1.16.55L3.46 5.23C3.17 5.57 3 6.02 3 6.5V19c0 1.1.9 2 2 2h14c1.1 0 2-.9 2-2V6.5c0-.48-.17-.93-.46-1.27zM12 17.5L6.5 12H10v-2h4v2h3.5L12 17.5zM5.12 5l.81-1h12l.94 1H5.12z" fill="#000"/></svg>
<svg style="left:1635.4px;top:666.5px" width="36" height="36" viewBox="0 0 24 24"><path d="M19 3H5c-1.110 0-2 .900-2 2v14c0 1.100.890 2 2 2h14c1.110 0 2-.900 2-2V5c0-1.100-.890-2-2-2zm-9 14l-5-5 1.410-1.410L10 14.170l7.590-7.590L19 8l-9 9z" fill="#000"/></svg>
<svg style="left:1708.6px;top:662.5px" width="36" height="36" viewBox="0 0 24 24"><path d="M4 12l1.41 1.41L11 7.83V20h2V7.83l5.58 5.59L20 12l-8-8-8 8z" fill="#000"/></svg>
<svg style="left:1751.0px;top:662.5px" width="36" height="36" viewBox="0 0 24 24"><path d="M20 12l-1.41-1.41L13 16.17V4h-2v12.17l-5.58-5.59L4 12l8 8 8-8z" fill="#000"/></svg>
<div class="t" style="left:1824.8px;top:676px;font-size:19.5px;color:#1f1f1f;font-weight:normal;letter-spacing:0.483px;font-style:normal;">Dec 27, 2021 7:16:40 AM</div>
<svg style="left:2107.5px;top:666.3px" width="36" height="36" viewBox="0 0 24 24"><path d="M6 19c0 1.1.9 2 2 2h8c1.1 0 2-.9 2-2V7H6v12zM19 4h-3.5l-1-1h-5l-1 1H5v2h14V4z" fill="#000"/></svg>
</div>
<div class="row">
<div class="abs" style="left:821px;top:711px;width:1408px;height:2px;background:linear-gradient(#f5f5f5 50%,#dcdcdc 50%)"></div>
<svg style="left:839.700px;top:730.6px" width="36.400" height="22.400" viewBox="0 0 208 128"><rect x="7" y="7" width="194" height="114" rx="12" fill="#fff" stroke="#000" stroke-width="13"/><text x="27" y="98" font-family="Liberation Sans, sans-serif" font-weight="bold" font-size="99" textLength="86" lengthAdjust="spacingAndGlyphs" stroke="#000" stroke-width="5">M</text><path d="M155 98l-30-33h20V30h20v35h20z"/></svg>
<div class="t" style="left:901.2px;top:734px;font-size:19.5px;color:#0f5c5f;font-weight:normal;letter-spacing:2.376px;font-style:normal;">tttt</div>
<svg style="left:1488.7px;top:723.6px" width="36" height="36" viewBox="0 0 24 24"><path d="M3.9 12c0-1.71 1.39-3.1 3.1-3.1h4V7H7c-2.76 0-5 2.24-5 5s2.24 5 5 5h4v-1.9H7c-1.71 0-3.1-1.39-3.1-3.1zM8 13h8v-2H8v2zm9-6h-4v1.9h4c1.71 0 3.1 1.39 3.1 3.1s-1.39 3.1-3.1 3.1h-4V17h4c2.76 0 5-2.24 5-5s-2.24-5-5-5z" fill="#000"/></svg>
<svg style="left:1562.2px;top:723.4px" width="36" height="36" viewBox="0 0 24 24"><path d="M20.54 5.23l-1.39-1.68C18.88 3.21 18.47 3 18 3H6c-.47 0-.88.21-1.16.55L3.46 5.23C3.17 5.57 3 6.02 3 6.5V19c0 1.1.9 2 2 2h14c1.1 0 2-.9 2-2V6.5c0-.48-.17-.93-.46-1.27zM12 17.5L6.5 12H10v-2h4v2h3.5L12 17.5zM5.12 5l.81-1h12l.94 1H5.12z" fill="#000"/></svg>
<svg style="left:1635.4px;top:723.6px" width="36" height="36" viewBox="0 0 24 24"><path d="M19.35 10.04C18.67 6.59 15.64 4 12 4 9.11 4 6.6 5.64 5.35 8.04 2.34 8.36 0 10.91 0 14c0 3.31 2.69 6 6 6h13c2.76 0 5-2.24 5-5 0-2.64-2.05-4.78-4.65-4.96zM10 17l-3.5-3.5 1.41-1.41L10 14.17 15.18 9l1.41 1.41L10 17z" fill="#000"/></svg>
<svg style="left:1708.6px;top:719.6px" width="36" height="36" viewBox="0 0 24 24"><path d="M4 12l1.41 1.41L11 7.83V20h2V7.83l5.58 5.59L20 12l-8-8-8 8z" fill="#000"/></svg>
<svg style="left:1751.0px;top:719.6px" width="36" height="36" viewBox="0 0 24 24"><path d="M20 12l-1.41-1.41L13 16.17V4h-2v12.17l-5.58-5.59L4 12l8 8 8-8z" fill="#000"/></svg>
<div class="t" style="left:1824.8px;top:733px;font-size:19.5px;color:#1f1f1f;font-weight:normal;letter-spacing:0.483px;font-style:normal;">Dec 27, 2021 7:17:03 AM</div>
<svg style="left:2107.5px;top:723.4px" width="36" height="36" viewBox="0 0 24 24"><path d="M6 19c0 1.1.9 2 2 2h8c1.1 0 2-.9 2-2V7H6v12zM19 4h-3.5l-1-1h-5l-1 1H5v2h14V4z" fill="#000"/></svg>
<svg style="left:2181.0px;top:722.8px" width="30" height="30" viewBox="0 0 24 24"><path d="M12 2C6.48 2 2 6.48 2 12s4.48 10 10 10 10-4.480 10-10S17.52 2 12 2zm-1 17.930c-3.950-.490-7-3.850-7-7.930 0-.620.080-1.210.210-1.790L9 15v1c0 1.100.900 2 2 2v1.930zm6.900-2.540c-.260-.810-1-1.390-1.900-1.390h-1v-3c0-.550-.450-1-1-1H8v-2h2c.550 0 1-.450 1-1V7h2c1.100 0 2-.900 2-2v-.410c2.930 1.190 5 4.060 5 7.410 0 2.080-.800 3.970-2.100 5.390z" fill="#d2d2d2"/></svg>
</div>
<div class="row">
<div class="abs" style="left:821px;top:769px;width:1408px;height:2px;background:linear-gradient(#f5f5f5 50%,#dcdcdc 50%)"></div>
<svg style="left:839.600px;top:780.8px" width="36.400" height="36.400" viewBox="0 0 36.400 36.400"><circle cx="18.200" cy="18.200" r="18.200" fill="#6d9b08"/><text x="18.300" y="24.700" font-family="Liberation Sans, sans-serif" font-weight="bold" fill="#f1fbd2" text-anchor="middle"><tspan font-size="20">{</tspan><tspan font-size="14" dy="-2.600" letter-spacing="-0.200">···</tspan><tspan font-size="20" dy="2.600">}</tspan></text></svg>
<div class="t" style="left:901.2px;top:791px;font-size:19.5px;color:#0f5c5f;font-weight:normal;letter-spacing:0.673px;font-style:normal;">openapi.yaml</div>
<svg style="left:1488.7px;top:780.7px" width="36" height="36" viewBox="0 0 24 24"><path d="M3.9 12c0-1.71 1.39-3.1 3.1-3.1h4V7H7c-2.76 0-5 2.24-5 5s2.24 5 5 5h4v-1.9H7c-1.71 0-3.1-1.39-3.1-3.1zM8 13h8v-2H8v2zm9-6h-4v1.9h4c1.71 0 3.1 1.39 3.1 3.1s-1.39 3.1-3.1 3.1h-4V17h4c2.76 0 5-2.24 5-5s-2.24-5-5-5z" fill="#000"/></svg>
<svg style="left:1562.2px;top:780.5px" width="36" height="36" viewBox="0 0 24 24"><path d="M20.54 5.23l-1.39-1.68C18.88 3.21 18.47 3 18 3H6c-.47 0-.88.21-1.16.55L3.46 5.23C3.17 5.57 3 6.02 3 6.5V19c0 1.1.9 2 2 2h14c1.1 0 2-.9 2-2V6.5c0-.48-.17-.93-.46-1.27zM12 17.5L6.5 12H10v-2h4v2h3.5L12 17.5zM5.12 5l.81-1h12l.94 1H5.12z" fill="#000"/></svg>
<svg style="left:1635.4px;top:780.7px" width="36" height="36" viewBox="0 0 24 24"><path d="M19.35 10.04C18.67 6.59 15.64 4 12 4 9.11 4 6.6 5.64 5.35 8.04 2.34 8.36 0 10.91 0 14c0 3.31 2.69 6 6 6h13c2.76 0 5-2.24 5-5 0-2.64-2.05-4.78-4.65-4.96zM10 17l-3.5-3.5 1.41-1.41L10 14.17 15.18 9l1.41 1.41L10 17z" fill="#000"/></svg>
<svg style="left:1708.6px;top:776.7px" width="36" height="36" viewBox="0 0 24 24"><path d="M4 12l1.41 1.41L11 7.83V20h2V7.83l5.58 5.59L20 12l-8-8-8 8z" fill="#000"/></svg>
<svg style="left:1751.0px;top:776.7px" width="36" height="36" viewBox="0 0 24 24"><path d="M20 12l-1.41-1.41L13 16.17V4h-2v12.17l-5.58-5.59L4 12l8 8 8-8z" fill="#000"/></svg>
<div class="t" style="left:1824.8px;top:790px;font-size:19.5px;color:#1f1f1f;font-weight:normal;letter-spacing:0.483px;font-style:normal;">Dec 27, 2021 7:21:06 AM</div>
<svg style="left:2107.5px;top:780.5px" width="36" height="36" viewBox="0 0 24 24"><path d="M6 19c0 1.1.9 2 2 2h8c1.1 0 2-.9 2-2V7H6v12zM19 4h-3.5l-1-1h-5l-1 1H5v2h14V4z" fill="#000"/></svg>
<svg style="left:2181.0px;top:779.9px" width="30" height="30" viewBox="0 0 24 24"><path d="M12 2C6.48 2 2 6.48 2 12s4.48 10 10 10 10-4.480 10-10S17.52 2 12 2zm-1 17.930c-3.950-.490-7-3.850-7-7.930 0-.620.080-1.210.210-1.790L9 15v1c0 1.100.900 2 2 2v1.930zm6.900-2.540c-.260-.810-1-1.390-1.900-1.390h-1v-3c0-.550-.450-1-1-1H8v-2h2c.550 0 1-.450 1-1V7h2c1.100 0 2-.900 2-2v-.410c2.930 1.190 5 4.060 5 7.410 0 2.080-.800 3.970-2.100 5.390z" fill="#d2d2d2"/></svg>
</div>
<div class="row">
<div class="abs" style="left:821px;top:826px;width:1408px;height:2px;background:linear-gradient(#f5f5f5 50%,#dcdcdc 50%)"></div>
<svg style="left:839.700px;top:844.8px" width="36.400" height="22.400" viewBox="0 0 208 128"><rect x="7" y="7" width="194" height="114" rx="12" fill="#fff" stroke="#000" stroke-width="13"/><text x="27" y="98" font-family="Liberation Sans, sans-serif" font-weight="bold" font-size="99" textLength="86" lengthAdjust="spacingAndGlyphs" stroke="#000" stroke-width="5">M</text><path d="M155 98l-30-33h20V30h20v35h20z"/></svg>
<div class="t" style="left:901.2px;top:848px;font-size:19.5px;color:#0f5c5f;font-weight:normal;letter-spacing:1.058px;font-style:normal;">Test Markdown with links</div>
<svg style="left:1488.7px;top:837.8px" width="36" height="36" viewBox="0 0 24 24"><path d="M3.9 12c0-1.71 1.39-3.1 3.1-3.1h4V7H7c-2.76 0-5 2.24-5 5s2.24 5 5 5h4v-1.9H7c-1.71 0-3.1-1.39-3.1-3.1zM8 13h8v-2H8v2zm9-6h-4v1.9h4c1.71 0 3.1 1.39 3.1 3.1s-1.39 3.1-3.1 3.1h-4V17h4c2.76 0 5-2.24 5-5s-2.24-5-5-5z" fill="#000"/></svg>
<svg style="left:1562.2px;top:837.6px" width="36" height="36" viewBox="0 0 24 24"><path d="M20.54 5.23l-1.39-1.68C18.88 3.21 18.47 3 18 3H6c-.47 0-.88.21-1.16.55L3.46 5.23C3.17 5.57 3 6.02 3 6.5V19c0 1.1.9 2 2 2h14c1.1 0 2-.9 2-2V6.5c0-.48-.17-.93-.46-1.27zM12 17.5L6.5 12H10v-2h4v2h3.5L12 17.5zM5.12 5l.81-1h12l.94 1H5.12z" fill="#000"/></svg>
<svg style="left:1635.4px;top:837.8px" width="36" height="36" viewBox="0 0 24 24"><path d="M19.35 10.04C18.67 6.59 15.64 4 12 4 9.11 4 6.6 5.64 5.35 8.04 2.34 8.36 0 10.91 0 14c0 3.31 2.69 6 6 6h13c2.76 0 5-2.24 5-5 0-2.64-2.05-4.78-4.65-4.96zM10 17l-3.5-3.5 1.41-1.41L10 14.17 15.18 9l1.41 1.41L10 17z" fill="#000"/></svg>
<svg style="left:1708.6px;top:833.8px" width="36" height="36" viewBox="0 0 24 24"><path d="M4 12l1.41 1.41L11 7.83V20h2V7.83l5.58 5.59L20 12l-8-8-8 8z" fill="#000"/></svg>
<svg style="left:1751.0px;top:833.8px" width="36" height="36" viewBox="0 0 24 24"><path d="M20 12l-1.41-1.41L13 16.17V4h-2v12.17l-5.58-5.59L4 12l8 8 8-8z" fill="#000"/></svg>
<div class="t" style="left:1824.8px;top:847px;font-size:19.5px;color:#1f1f1f;font-weight:normal;letter-spacing:0.63px;font-style:normal;">Jan 21, 2022 3:54:34 AM</div>
<svg style="left:2107.5px;top:837.6px" width="36" height="36" viewBox="0 0 24 24"><path d="M6 19c0 1.1.9 2 2 2h8c1.1 0 2-.9 2-2V7H6v12zM19 4h-3.5l-1-1h-5l-1 1H5v2h14V4z" fill="#000"/></svg>
<svg style="left:2181.0px;top:837.0px" width="30" height="30" viewBox="0 0 24 24"><path d="M12 2C6.48 2 2 6.48 2 12s4.48 10 10 10 10-4.480 10-10S17.52 2 12 2zm-1 17.930c-3.950-.490-7-3.850-7-7.930 0-.620.080-1.210.210-1.790L9 15v1c0 1.100.900 2 2 2v1.930zm6.900-2.540c-.260-.810-1-1.390-1.900-1.390h-1v-3c0-.550-.450-1-1-1H8v-2h2c.550 0 1-.450 1-1V7h2c1.100 0 2-.900 2-2v-.410c2.930 1.190 5 4.060 5 7.410 0 2.080-.800 3.970-2.100 5.390z" fill="#d2d2d2"/></svg>
</div>
<div class="row">
<div class="abs" style="left:821px;top:883px;width:1408px;height:2px;background:linear-gradient(#f5f5f5 50%,#dcdcdc 50%)"></div>
<svg style="left:839.600px;top:895.0px" width="36.400" height="36.400" viewBox="0 0 36.400 36.400"><circle cx="18.200" cy="18.200" r="18.200" fill="#6d9b08"/><text x="18.300" y="24.700" font-family="Liberation Sans, sans-serif" font-weight="bold" fill="#f1fbd2" text-anchor="middle"><tspan font-size="20">{</tspan><tspan font-size="14" dy="-2.600" letter-spacing="-0.200">···</tspan><tspan font-size="20" dy="2.600">}</tspan></text></svg>
<div class="t" style="left:901.2px;top:905px;font-size:19.5px;color:#0f5c5f;font-weight:normal;letter-spacing:0.699px;font-style:normal;">Swagger Petstore</div>
<svg style="left:1488.7px;top:894.9px" width="36" height="36" viewBox="0 0 24 24"><path d="M3.9 12c0-1.71 1.39-3.1 3.1-3.1h4V7H7c-2.76 0-5 2.24-5 5s2.24 5 5 5h4v-1.9H7c-1.71 0-3.1-1.39-3.1-3.1zM8 13h8v-2H8v2zm9-6h-4v1.9h4c1.71 0 3.1 1.39 3.1 3.1s-1.39 3.1-3.1 3.1h-4V17h4c2.76 0 5-2.24 5-5s-2.24-5-5-5z" fill="#000"/></svg>
<svg style="left:1562.2px;top:894.7px" width="36" height="36" viewBox="0 0 24 24"><path d="M20.54 5.23l-1.39-1.68C18.88 3.21 18.47 3 18 3H6c-.47 0-.88.21-1.16.55L3.46 5.23C3.17 5.57 3 6.02 3 6.5V19c0 1.1.9 2 2 2h14c1.1 0 2-.9 2-2V6.5c0-.48-.17-.93-.46-1.27zM12 17.5L6.5 12H10v-2h4v2h3.5L12 17.5zM5.12 5l.81-1h12l.94 1H5.12z" fill="#000"/></svg>
<svg style="left:1635.4px;top:894.9px" width="36" height="36" viewBox="0 0 24 24"><path d="M19.35 10.04C18.67 6.59 15.64 4 12 4 9.11 4 6.6 5.64 5.35 8.04 2.34 8.36 0 10.91 0 14c0 3.31 2.69 6 6 6h13c2.76 0 5-2.24 5-5 0-2.64-2.05-4.78-4.65-4.96zM10 17l-3.5-3.5 1.41-1.41L10 14.17 15.18 9l1.41 1.41L10 17z" fill="#000"/></svg>
<svg style="left:1708.6px;top:890.9px" width="36" height="36" viewBox="0 0 24 24"><path d="M4 12l1.41 1.41L11 7.83V20h2V7.83l5.58 5.59L20 12l-8-8-8 8z" fill="#000"/></svg>
<svg style="left:1751.0px;top:890.9px" width="36" height="36" viewBox="0 0 24 24"><path d="M20 12l-1.41-1.41L13 16.17V4h-2v12.17l-5.58-5.59L4 12l8 8 8-8z" fill="#000"/></svg>
<div class="t" style="left:1824.8px;top:905px;font-size:19.5px;color:#1f1f1f;font-weight:normal;letter-spacing:0.634px;font-style:normal;">Mar 24, 2022 10:55:21 AM</div>
<svg style="left:2107.5px;top:894.7px" width="36" height="36" viewBox="0 0 24 24"><path d="M6 19c0 1.1.9 2 2 2h8c1.1 0 2-.9 2-2V7H6v12zM19 4h-3.5l-1-1h-5l-1 1H5v2h14V4z" fill="#000"/></svg>
<svg style="left:2181.0px;top:894.1px" width="30" height="30" viewBox="0 0 24 24"><path d="M12 2C6.48 2 2 6.48 2 12s4.48 10 10 10 10-4.480 10-10S17.52 2 12 2zm-1 17.930c-3.950-.490-7-3.850-7-7.930 0-.620.080-1.210.210-1.790L9 15v1c0 1.100.900 2 2 2v1.930zm6.900-2.540c-.260-.810-1-1.390-1.900-1.390h-1v-3c0-.550-.450-1-1-1H8v-2h2c.550 0 1-.450 1-1V7h2c1.100 0 2-.900 2-2v-.410c2.930 1.190 5 4.060 5 7.410 0 2.080-.800 3.970-2.100 5.390z" fill="#d2d2d2"/></svg>
</div>
<div class="row">
<div class="abs" style="left:821px;top:940px;width:1408px;height:2px;background:linear-gradient(#f5f5f5 50%,#dcdcdc 50%)"></div>
<svg style="left:839.800px;top:952.1px" width="36.200" height="36.200" viewBox="0 0 36.200 36.200"><rect width="36.200" height="36.200" rx="8" fill="#e40046"/><g fill="none" stroke="#fff" stroke-width="1.500" stroke-linecap="round" stroke-linejoin="round"><path d="M9.600 29.400L19.300 6.700 28.400 29.400"/><path d="M8.100 18.800h10.200M6.400 22.500h10.600"/></g></svg>
<div class="t" style="left:901.2px;top:962px;font-size:19.5px;color:#0f5c5f;font-weight:normal;letter-spacing:1.024px;font-style:normal;">Test Ascii</div>
<svg style="left:1488.7px;top:952.0px" width="36" height="36" viewBox="0 0 24 24"><path d="M3.9 12c0-1.71 1.39-3.1 3.1-3.1h4V7H7c-2.76 0-5 2.24-5 5s2.24 5 5 5h4v-1.9H7c-1.71 0-3.1-1.39-3.1-3.1zM8 13h8v-2H8v2zm9-6h-4v1.9h4c1.71 0 3.1 1.39 3.1 3.1s-1.39 3.1-3.1 3.1h-4V17h4c2.76 0 5-2.24 5-5s-2.24-5-5-5z" fill="#000"/></svg>
<svg style="left:1562.2px;top:951.8px" width="36" height="36" viewBox="0 0 24 24"><path d="M20.54 5.23l-1.39-1.68C18.88 3.21 18.47 3 18 3H6c-.47 0-.88.21-1.16.55L3.46 5.23C3.17 5.57 3 6.02 3 6.5V19c0 1.1.9 2 2 2h14c1.1 0 2-.9 2-2V6.5c0-.48-.17-.93-.46-1.27zM12 17.5L6.5 12H10v-2h4v2h3.5L12 17.5zM5.12 5l.81-1h12l.94 1H5.12z" fill="#000"/></svg>
<svg style="left:1635.4px;top:952.0px" width="36" height="36" viewBox="0 0 24 24"><path d="M19.35 10.04C18.67 6.59 15.64 4 12 4 9.11 4 6.6 5.64 5.35 8.04 2.34 8.36 0 10.91 0 14c0 3.31 2.69 6 6 6h13c2.76 0 5-2.24 5-5 0-2.64-2.05-4.78-4.65-4.96zM10 17l-3.5-3.5 1.41-1.41L10 14.17 15.18 9l1.41 1.41L10 17z" fill="#000"/></svg>
<svg style="left:1708.6px;top:948.0px" width="36" height="36" viewBox="0 0 24 24"><path d="M4 12l1.41 1.41L11 7.83V20h2V7.83l5.58 5.59L20 12l-8-8-8 8z" fill="#000"/></svg>
<svg style="left:1751.0px;top:948.0px" width="36" height="36" viewBox="0 0 24 24"><path d="M20 12l-1.41-1.41L13 16.17V4h-2v12.17l-5.58-5.59L4 12l8 8 8-8z" fill="#000"/></svg>
<div class="t" style="left:1824.8px;top:962px;font-size:19.5px;color:#1f1f1f;font-weight:normal;letter-spacing:0.63px;font-style:normal;">Jan 18, 2022 5:37:43 AM</div>
<svg style="left:2107.5px;top:951.8px" width="36" height="36" viewBox="0 0 24 24"><path d="M6 19c0 1.1.9 2 2 2h8c1.1 0 2-.9 2-2V7H6v12zM19 4h-3.5l-1-1h-5l-1 1H5v2h14V4z" fill="#000"/></svg>
</div>
<div class="row">
<div class="abs" style="left:821px;top:997px;width:1408px;height:2px;background:linear-gradient(#f5f5f5 50%,#dcdcdc 50%)"></div>
<svg style="left:839.700px;top:1016.1px" width="36.400" height="22.400" viewBox="0 0 208 128"><rect x="7" y="7" width="194" height="114" rx="12" fill="#fff" stroke="#000" stroke-width="13"/><text x="27" y="98" font-family="Liberation Sans, sans-serif" font-weight="bold" font-size="99" textLength="86" lengthAdjust="spacingAndGlyphs" stroke="#000" stroke-width="5">M</text><path d="M155 98l-30-33h20V30h20v35h20z"/></svg>
<div class="t" style="left:901.2px;top:1019px;font-size:19.5px;color:#0f5c5f;font-weight:normal;letter-spacing:0.757px;font-style:normal;">MD Table of content</div>
<svg style="left:1488.7px;top:1009.1px" width="36" height="36" viewBox="0 0 24 24"><path d="M3.9 12c0-1.71 1.39-3.1 3.1-3.1h4V7H7c-2.76 0-5 2.24-5 5s2.24 5 5 5h4v-1.9H7c-1.71 0-3.1-1.39-3.1-3.1zM8 13h8v-2H8v2zm9-6h-4v1.9h4c1.71 0 3.1 1.39 3.1 3.1s-1.39 3.1-3.1 3.1h-4V17h4c2.76 0 5-2.24 5-5s-2.24-5-5-5z" fill="#000"/></svg>
<svg style="left:1562.2px;top:1008.9px" width="36" height="36" viewBox="0 0 24 24"><path d="M20.54 5.23l-1.39-1.68C18.88 3.21 18.47 3 18 3H6c-.47 0-.88.21-1.16.55L3.46 5.23C3.17 5.57 3 6.02 3 6.5V19c0 1.1.9 2 2 2h14c1.1 0 2-.9 2-2V6.5c0-.48-.17-.93-.46-1.27zM12 17.5L6.5 12H10v-2h4v2h3.5L12 17.5zM5.12 5l.81-1h12l.94 1H5.12z" fill="#000"/></svg>
<svg style="left:1635.4px;top:1009.1px" width="36" height="36" viewBox="0 0 24 24"><path d="M19.35 10.04C18.67 6.59 15.64 4 12 4 9.11 4 6.6 5.64 5.35 8.04 2.34 8.36 0 10.91 0 14c0 3.31 2.69 6 6 6h13c2.76 0 5-2.24 5-5 0-2.64-2.05-4.78-4.65-4.96zM10 17l-3.5-3.5 1.41-1.41L10 14.17 15.18 9l1.41 1.41L10 17z" fill="#000"/></svg>
<svg style="left:1708.6px;top:1005.1px" width="36" height="36" viewBox="0 0 24 24"><path d="M4 12l1.41 1.41L11 7.83V20h2V7.83l5.58 5.59L20 12l-8-8-8 8z" fill="#000"/></svg>
<svg style="left:1751.0px;top:1005.1px" width="36" height="36" viewBox="0 0 24 24"><path d="M20 12l-1.41-1.41L13 16.17V4h-2v12.17l-5.58-5.59L4 12l8 8 8-8z" fill="#000"/></svg>
<div class="t" style="left:1824.8px;top:1019px;font-size:19.5px;color:#1f1f1f;font-weight:normal;letter-spacing:0.63px;font-style:normal;">Jan 21, 2022 6:03:55 AM</div>
<svg style="left:2107.5px;top:1008.9px" width="36" height="36" viewBox="0 0 24 24"><path d="M6 19c0 1.1.9 2 2 2h8c1.1 0 2-.9 2-2V7H6v12zM19 4h-3.5l-1-1h-5l-1 1H5v2h14V4z" fill="#000"/></svg>
<svg style="left:2181.0px;top:1008.3px" width="30" height="30" viewBox="0 0 24 24"><path d="M12 2C6.48 2 2 6.48 2 12s4.48 10 10 10 10-4.480 10-10S17.52 2 12 2zm-1 17.930c-3.950-.490-7-3.850-7-7.930 0-.620.080-1.210.210-1.790L9 15v1c0 1.100.900 2 2 2v1.930zm6.900-2.540c-.260-.810-1-1.390-1.900-1.390h-1v-3c0-.550-.450-1-1-1H8v-2h2c.550 0 1-.450 1-1V7h2c1.100 0 2-.900 2-2v-.410c2.930 1.190 5 4.060 5 7.410 0 2.080-.800 3.970-2.100 5.390z" fill="#d2d2d2"/></svg>
</div>
<div class="row">
<div class="abs" style="left:821px;top:1054px;width:1408px;height:2px;background:linear-gradient(#f5f5f5 50%,#dcdcdc 50%)"></div>
<svg style="left:839.800px;top:1066.2px" width="36.200" height="36.200" viewBox="0 0 36.200 36.200"><rect width="36.200" height="36.200" rx="8" fill="#e40046"/><g fill="none" stroke="#fff" stroke-width="1.500" stroke-linecap="round" stroke-linejoin="round"><path d="M9.600 29.400L19.300 6.700 28.400 29.400"/><path d="M8.100 18.800h10.200M6.400 22.500h10.600"/></g></svg>
<div class="t" style="left:901.2px;top:1076px;font-size:19.5px;color:#0f5c5f;font-weight:normal;letter-spacing:1.158px;font-style:normal;">asciidoctor-highlight</div>
<svg style="left:1488.7px;top:1066.1px" width="36" height="36" viewBox="0 0 24 24"><path d="M3.9 12c0-1.71 1.39-3.1 3.1-3.1h4V7H7c-2.76 0-5 2.24-5 5s2.24 5 5 5h4v-1.9H7c-1.71 0-3.1-1.39-3.1-3.1zM8 13h8v-2H8v2zm9-6h-4v1.9h4c1.71 0 3.1 1.39 3.1 3.1s-1.39 3.1-3.1 3.1h-4V17h4c2.76 0 5-2.24 5-5s-2.24-5-5-5z" fill="#000"/></svg>
<svg style="left:1562.2px;top:1065.9px" width="36" height="36" viewBox="0 0 24 24"><path d="M20.54 5.23l-1.39-1.68C18.88 3.21 18.47 3 18 3H6c-.47 0-.88.21-1.16.55L3.46 5.23C3.17 5.57 3 6.02 3 6.5V19c0 1.1.9 2 2 2h14c1.1 0 2-.9 2-2V6.5c0-.48-.17-.93-.46-1.27zM12 17.5L6.5 12H10v-2h4v2h3.5L12 17.5zM5.12 5l.81-1h12l.94 1H5.12z" fill="#000"/></svg>
<svg style="left:1635.4px;top:1066.1px" width="36" height="36" viewBox="0 0 24 24"><path d="M19.35 10.04C18.67 6.59 15.64 4 12 4 9.11 4 6.6 5.64 5.35 8.04 2.34 8.36 0 10.91 0 14c0 3.31 2.69 6 6 6h13c2.76 0 5-2.24 5-5 0-2.64-2.05-4.78-4.65-4.96zM10 17l-3.5-3.5 1.41-1.41L10 14.17 15.18 9l1.41 1.41L10 17z" fill="#000"/></svg>
<svg style="left:1708.6px;top:1062.1px" width="36" height="36" viewBox="0 0 24 24"><path d="M4 12l1.41 1.41L11 7.83V20h2V7.83l5.58 5.59L20 12l-8-8-8 8z" fill="#000"/></svg>
<svg style="left:1751.0px;top:1062.1px" width="36" height="36" viewBox="0 0 24 24"><path d="M20 12l-1.41-1.41L13 16.17V4h-2v12.17l-5.58-5.59L4 12l8 8 8-8z" fill="#000"/></svg>
<div class="t" style="left:1824.8px;top:1076px;font-size:19.5px;color:#1f1f1f;font-weight:normal;letter-spacing:0.646px;font-style:normal;">Mar 24, 2022 8:55:31 AM</div>
<svg style="left:2107.5px;top:1065.9px" width="36" height="36" viewBox="0 0 24 24"><path d="M6 19c0 1.1.9 2 2 2h8c1.1 0 2-.9 2-2V7H6v12zM19 4h-3.5l-1-1h-5l-1 1H5v2h14V4z" fill="#000"/></svg>
<svg style="left:2181.0px;top:1065.3px" width="30" height="30" viewBox="0 0 24 24"><path d="M12 2C6.48 2 2 6.48 2 12s4.48 10 10 10 10-4.480 10-10S17.52 2 12 2zm-1 17.930c-3.950-.490-7-3.850-7-7.930 0-.620.080-1.210.210-1.790L9 15v1c0 1.100.900 2 2 2v1.930zm6.900-2.540c-.260-.810-1-1.390-1.900-1.390h-1v-3c0-.550-.450-1-1-1H8v-2h2c.550 0 1-.450 1-1V7h2c1.100 0 2-.900 2-2v-.410c2.930 1.190 5 4.060 5 7.410 0 2.080-.800 3.970-2.100 5.390z" fill="#d2d2d2"/></svg>
</div>
<div class="row">
<div class="abs" style="left:821px;top:1111px;width:1408px;height:2px;background:linear-gradient(#f5f5f5 50%,#dcdcdc 50%)"></div>
<svg style="left:839.700px;top:1130.2px" width="36.400" height="22.400" viewBox="0 0 208 128"><rect x="7" y="7" width="194" height="114" rx="12" fill="#fff" stroke="#000" stroke-width="13"/><text x="27" y="98" font-family="Liberation Sans, sans-serif" font-weight="bold" font-size="99" textLength="86" lengthAdjust="spacingAndGlyphs" stroke="#000" stroke-width="5">M</text><path d="M155 98l-30-33h20V30h20v35h20z"/></svg>
<div class="t" style="left:901.2px;top:1133px;font-size:19.5px;color:#848484;font-weight:normal;letter-spacing:0.913px;font-style:italic;">onlineTest</div>
<svg style="left:1488.7px;top:1123.2px" width="36" height="36" viewBox="0 0 24 24"><path d="M3.9 12c0-1.71 1.39-3.1 3.1-3.1h4V7H7c-2.76 0-5 2.24-5 5s2.24 5 5 5h4v-1.9H7c-1.71 0-3.1-1.39-3.1-3.1zM8 13h8v-2H8v2zm9-6h-4v1.9h4c1.71 0 3.1 1.39 3.1 3.1s-1.39 3.1-3.1 3.1h-4V17h4c2.76 0 5-2.24 5-5s-2.24-5-5-5z" fill="#000"/></svg>
<svg style="left:1562.2px;top:1123.0px" width="36" height="36" viewBox="0 0 24 24"><path d="M20.54 5.23l-1.39-1.68C18.88 3.21 18.47 3 18 3H6c-.47 0-.88.21-1.16.55L3.46 5.23C3.17 5.57 3 6.02 3 6.5V19c0 1.1.9 2 2 2h14c1.1 0 2-.9 2-2V6.5c0-.48-.17-.93-.46-1.27zM12 17.5L6.5 12H10v-2h4v2h3.5L12 17.5zM5.12 5l.81-1h12l.94 1H5.12z" fill="#000"/></svg>
<svg style="left:1635.4px;top:1123.2px" width="36" height="36" viewBox="0 0 24 24"><path d="M19.35 10.04C18.67 6.59 15.64 4 12 4 9.11 4 6.6 5.64 5.35 8.04 2.34 8.36 0 10.91 0 14c0 3.31 2.69 6 6 6h13c2.76 0 5-2.24 5-5 0-2.64-2.05-4.78-4.65-4.96zM19 18H6c-2.21 0-4-1.79-4-4s1.79-4 4-4h.71C7.37 7.69 9.48 6 12 6c3.04 0 5.5 2.46 5.5 5.5v.5H19c1.66 0 3 1.34 3 3s-1.34 3-3 3z" fill="#000"/></svg>
<svg style="left:1708.6px;top:1119.2px" width="36" height="36" viewBox="0 0 24 24"><path d="M4 12l1.41 1.41L11 7.83V20h2V7.83l5.58 5.59L20 12l-8-8-8 8z" fill="#000"/></svg>
<svg style="left:1751.0px;top:1119.2px" width="36" height="36" viewBox="0 0 24 24"><path d="M20 12l-1.41-1.41L13 16.17V4h-2v12.17l-5.58-5.59L4 12l8 8 8-8z" fill="#000"/></svg>
<div class="t" style="left:1824.8px;top:1133px;font-size:19.5px;color:#1f1f1f;font-weight:normal;letter-spacing:0.53px;font-style:normal;">Jun 7, 2023 3:55:00 PM</div>
<svg style="left:2107.5px;top:1123.0px" width="36" height="36" viewBox="0 0 24 24"><path d="M6 19c0 1.1.9 2 2 2h8c1.1 0 2-.9 2-2V7H6v12zM19 4h-3.5l-1-1h-5l-1 1H5v2h14V4z" fill="#000"/></svg>
<svg style="left:2181.0px;top:1122.4px" width="30" height="30" viewBox="0 0 24 24"><path d="M12 2C6.48 2 2 6.48 2 12s4.48 10 10 10 10-4.480 10-10S17.52 2 12 2zm-1 17.930c-3.950-.490-7-3.850-7-7.930 0-.620.080-1.210.210-1.790L9 15v1c0 1.100.900 2 2 2v1.930zm6.900-2.540c-.260-.810-1-1.390-1.900-1.390h-1v-3c0-.550-.450-1-1-1H8v-2h2c.550 0 1-.450 1-1V7h2c1.100 0 2-.900 2-2v-.410c2.930 1.190 5 4.060 5 7.410 0 2.080-.800 3.970-2.100 5.390z" fill="#d2d2d2"/></svg>
</div>
<div class="abs" style="left:2176px;top:1037px;width:85px;height:85px;border-radius:50%;background:#1c1d3c;box-shadow:0 4px 9px rgba(0,0,0,.2),0 9px 20px rgba(0,0,0,.1)"></div>
<svg style="left:2206.500px;top:1067.800px" width="24" height="24" viewBox="0 0 24 24"><path d="M12 1.200v21.600M1.200 12h21.600" stroke="#fff" stroke-width="3.400" fill="none"/></svg>
</main>
<div class="abs" style="left:0;top:1108px;width:2304px;height:54px;background:linear-gradient(rgba(0,0,0,0) 0%,rgba(0,0,0,.015) 25%,rgba(0,0,0,.05) 50%,rgba(0,0,0,.1) 75%,rgba(0,0,0,.18) 100%);pointer-events:none"></div>
<div class="abs" style="left:0;top:0;width:1px;height:1162px;background:#33344e"></div>
<svg style="left:0;top:1148px" width="14" height="14" viewBox="0 0 14 14"><path d="M0 0v14h14A14 14 0 0 1 0 0z" fill="#000"/></svg>
<svg style="left:2290px;top:1148px" width="14" height="14" viewBox="0 0 14 14"><path d="M14 0v14H0A14 14 0 0 0 14 0z" fill="#0a2630"/></svg>
<div class="abs" style="left:746px;top:105px;width:1px;height:1057px;background:#6d6a7e"></div>
</body></html>
